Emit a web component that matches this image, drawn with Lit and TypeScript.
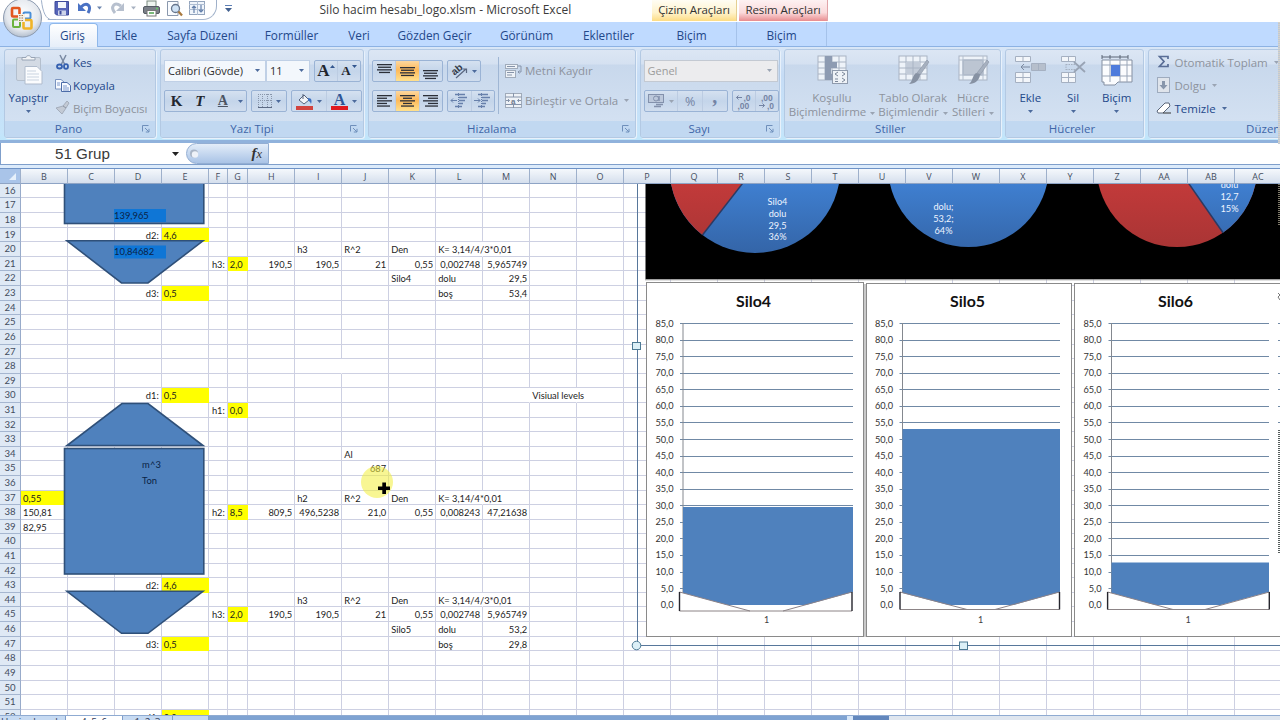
import { LitElement, html, css, svg, nothing } from "lit";
import { customElement } from "lit/decorators.js";
import { classMap } from "lit/directives/class-map.js";

const COLS: [string, number][] = [
  ["B", 47], ["C", 47], ["D", 46.8], ["E", 47.2], ["F", 18.8], ["G", 20.7], ["H", 46.7],
  ["I", 47], ["J", 47], ["K", 47], ["L", 47], ["M", 47], ["N", 47], ["O", 46.8],
  ["P", 47], ["Q", 47], ["R", 47], ["S", 47], ["T", 47], ["U", 47], ["V", 47],
  ["W", 47], ["X", 47], ["Y", 47], ["Z", 47], ["AA", 47], ["AB", 47], ["AC", 47],
];
const ROWS = Array.from({ length: 37 }, (_, i) => i + 16);

/* value, right alignment, yellow fill, text running over the right border */
type Cell = { v: string; r?: boolean; y?: boolean; over?: boolean };
const CELLS: Record<string, Cell> = {
  D19: { v: "d2:", r: true }, E19: { v: "4,6", y: true },
  I20: { v: "h3" }, J20: { v: "R^2" }, K20: { v: "Den" }, L20: { v: "K= 3,14/4/3*0,01", over: true },
  F21: { v: "h3:", r: true }, G21: { v: "2,0", y: true }, H21: { v: "190,5", r: true }, I21: { v: "190,5", r: true },
  J21: { v: "21", r: true }, K21: { v: "0,55", r: true }, L21: { v: "0,002748", r: true }, M21: { v: "5,965749", r: true },
  K22: { v: "Silo4" }, L22: { v: "dolu" }, M22: { v: "29,5", r: true },
  D23: { v: "d3:", r: true }, E23: { v: "0,5", y: true }, L23: { v: "boş" }, M23: { v: "53,4", r: true },
  I28: { v: "", over: true },
  D30: { v: "d1:", r: true }, E30: { v: "0,5", y: true }, N30: { v: "Visiual levels", over: true }, M30: { v: "", over: true },
  F31: { v: "h1:", r: true }, G31: { v: "0,0", y: true },
  J34: { v: "Al" }, J35: { v: "687", r: true },
  B37: { v: "0,55", y: true }, I37: { v: "h2" }, J37: { v: "R^2" }, K37: { v: "Den" }, L37: { v: "K= 3,14/4*0,01", over: true },
  B38: { v: "150,81" }, F38: { v: "h2:", r: true }, G38: { v: "8,5", y: true }, H38: { v: "809,5", r: true },
  I38: { v: "496,5238", r: true }, J38: { v: "21,0", r: true }, K38: { v: "0,55", r: true },
  L38: { v: "0,008243", r: true }, M38: { v: "47,21638", r: true },
  B39: { v: "82,95" },
  D43: { v: "d2:", r: true }, E43: { v: "4,6", y: true },
  I44: { v: "h3" }, J44: { v: "R^2" }, K44: { v: "Den" }, L44: { v: "K= 3,14/4/3*0,01", over: true },
  F45: { v: "h3:", r: true }, G45: { v: "2,0", y: true }, H45: { v: "190,5", r: true }, I45: { v: "190,5", r: true },
  J45: { v: "21", r: true }, K45: { v: "0,55", r: true }, L45: { v: "0,002748", r: true }, M45: { v: "5,965749", r: true },
  K46: { v: "Silo5" }, L46: { v: "dolu" }, M46: { v: "53,2", r: true },
  D47: { v: "d3:", r: true }, E47: { v: "0,5", y: true }, L47: { v: "boş" }, M47: { v: "29,8", r: true },
  D52: { v: "d1:", r: true }, E52: { v: "0,0", y: true },
};

const CHARTS = [
  { name: "Silo4", x: 646.5, w: 217, y: 282.5, title: 753.5, lab: 673.5, ax: 683, end: 853, top: 507, v1: 679.5, v2: 852, b1: 727.5, b2: 806, d1: 750, d2: 783, base: 611, mid: 766.5 },
  { name: "Silo5", x: 866.5, w: 205, y: 283.5, title: 967.5, lab: 893, ax: 902.5, end: 1060, top: 429, v1: 900, v2: 1059.5, b1: 948.5, b2: 1013.5, d1: 967, d2: 995, base: 609.5, mid: 980.5 },
  { name: "Silo6", x: 1074.5, w: 220, y: 283.5, title: 1175.5, lab: 1101.5, ax: 1111.5, end: 1269, top: 562.5, v1: 1107.6, v2: 1269.3, b1: 1155.3, b2: 1220.8, d1: 1173, d2: 1205, base: 609.5, mid: 1188 },
];

const bars = (ws: number[], a: "s" | "m" | "e", y: number) =>
  ws.map((w, i) => {
    const x = a === "s" ? 0 : a === "m" ? (15 - w) / 2 : 15 - w;
    return svg`<rect x=${x} y=${y + i * 2.6} width=${w} height="1.3" fill="#2b2f38"/>`;
  });
const alignIcon = (ws: number[], a: "s" | "m" | "e", y: number) =>
  html`<svg width="15" height="16" viewBox="0 0 15 16">${bars(ws, a, y)}</svg>`;

const drop = (muted = false) =>
  html`<svg class="drop" width="5" height="3" viewBox="0 0 5 3"><path d="M0 0H5L2.500 3Z" fill=${muted ? "#9aa4b3" : "#4c6a9c"}/></svg>`;

const launcher = html`<svg class="launch" width="8" height="8" viewBox="0 0 8 8" fill="none" stroke="#6f8fbb"><path d="M.5 6.500V.5H6.500"/><path d="M3 3L7 7M7 3.800V7H3.800"/></svg>`;

const indent = (flip: boolean) => html`<svg width="17" height="16" viewBox="0 0 17 16" stroke="#6780ab" fill="none">
  <path d="M4 1.500H14M8 4.500H16M8 7.500H14M4 13.500H11" stroke-width="1.500"/><path d="M8 10.500H12" stroke-width="1.500"/>
  <path d=${flip ? "M0 7.500H6M4 5.500L6 7.500L4 9.500" : "M6 7.500H0M2 5.500L0 7.500L2 9.500"}/><path d="M7.500 0V16" stroke-dasharray="1 1"/></svg>`;

const tableIcon = (kind: "cond" | "table" | "style") => html`<svg width="31" height="30" viewBox="0 0 31 30">
  <rect x="1" y="1" width="28" height="24" fill="#eef3f9" stroke="#a9b4c4"/>
  ${kind === "style"
    ? svg`<rect x="5" y="5" width="20" height="15" fill="#bcc5d2" stroke="#9aa6b8"/><path d="M1 5H29M1 20H29M5 1V25M25 1V25" stroke="#b4bfce" fill="none"/>`
    : svg`<path d="M1 7H29M1 13H29M1 19H29M8 1V25M15 1V25M22 1V25" stroke="#a9b4c4" fill="none"/>`}
  ${kind === "cond"
    ? svg`<path d="M8 1h7v6h5v6h-6v6h3v6H8Z" fill="#8d9bb2"/><rect x="15.500" y="15.500" width="15" height="13" fill="#eef2f7" stroke="#8f9bad"/><path d="M21 17L18 19L21 21M25 17L28 19L25 21M18 24H21M18 26.500H21M25 23L28 25L25 27" stroke="#7b8799" fill="none"/>`
    : nothing}
  ${kind === "table" ? svg`<rect x="8" y="7" width="14" height="12" fill="#c3ccd9"/><path d="M8 13H22M15 7V19" stroke="#a9b4c4"/>` : nothing}
  ${kind !== "cond"
    ? svg`<path d="M31 7L22 20L19 18L29 5Z" fill="#a6b0bf" stroke="#8994a5" stroke-width=".6"/><path d="M22 19C22 25 17 29 11 29C15 26 14 21 18 18Z" fill="#8792a3"/>`
    : nothing}
</svg>`;

@customElement("app-root")
export class AppRoot extends LitElement {
  static styles = css`
    :host { display: flex; flex-direction: column; width: 1280px; height: 720px; overflow: hidden; background: #fff; font-family: "Open Sans", "Noto Sans", sans-serif; font-size: 11.5px; color: #23488a; position: relative; }
    * { box-sizing: border-box; }
    svg { display: block; flex: none; overflow: visible; }
    .title { height: 22px; flex: none; display: flex; background: #fff; }
    .quick { width: 217px; height: 20px; padding-left: 53px; display: flex; align-items: center; border-right: 1px solid #9fb0c9; border-bottom: 1px solid #a9b8ce; border-radius: 0 0 14px 0; }
    .more { width: 20px; padding: 5px 0 0 8px; }
    .doc { width: 414px; padding-left: 82.500px; color: #3b3b3b; font-size: 12px; line-height: 19px; white-space: nowrap; letter-spacing: .04px; }
    .ctx { height: 21px; text-align: center; color: #333; font-size: 11.500px; line-height: 20px; white-space: nowrap; letter-spacing: -.08px; }
    .yel { width: 85px; background: linear-gradient(#fffdf4, #fff3cc 60%, #fddc83); border-right: 1px solid #e5cf92; margin-left: 1px; }
    .red { width: 89px; background: linear-gradient(#fdf1f2, #fbdadb 60%, #e88c8f); border-right: 1px solid #e0a4a8; margin-left: 2px; }
    .tabs { height: 25px; flex: none; display: flex; background: #bfdaff; border-bottom: 1px solid #8db2e3; font-size: 11.800px; line-height: 26px; text-align: center; white-space: nowrap; }
    .tab { flex: none; }
    .tab.on { height: 24px; margin-top: 1px; line-height: 23px; background: linear-gradient(#fff, #e6eef9); border: 1px solid #8fb8ea; border-bottom: none; border-radius: 4px 4px 0 0; padding-right: 2px; }
    .tab.sep { border-right: 1px solid #a5c2ea; }
    .ribbon { height: 96px; flex: none; display: flex; gap: 4px; padding: 2px 0 5px 4px; background: linear-gradient(#d8e6f7, #c6dcf5 30%, #c5e4fa 92%, #bfe6fb); border-bottom: 3px solid #90b2dc; overflow: hidden; }
    .group { flex: none; height: 89px; display: flex; flex-direction: column; border: 1px solid #b3c9e3; border-radius: 3px; background: linear-gradient(#dce6f4, #d5e1f1 14px, #c8d8ec 15px, #d6e3f3); box-shadow: 1px 1px 0 #e8f1fb; overflow: hidden; }
    .body { height: 71px; display: flex; flex: none; }
    .foot { height: 16px; background: #c1d8f1; display: flex; align-items: center; color: #3e66a8; font-size: 11.500px; padding: 0 4px 1px 0; }
    .foot span { flex: 1; text-align: center; padding-right: 6px; }
    .foot .none { padding-right: 0; }
    .launch { margin-right: 1px; }
    .rows { display: flex; flex-direction: column; gap: 8px; padding: 10px 3px 0; }
    .row { display: flex; height: 22px; }
    .box { display: flex; border: 1px solid #9ab3d5; border-radius: 2px; background: linear-gradient(#d5e1f0, #c4d5ea 50%, #d0ddee); }
    .box > * { flex: 1; display: flex; align-items: center; justify-content: center; gap: 4px; border-right: 1px solid #bccce2; }
    .box > *:last-child { border-right: none; }
    .box > .lit { background: linear-gradient(#fcd7a0, #fdb95a 45%, #ffe08d); }
    .plain > * { border-right: none; }
    .combo { display: flex; align-items: center; justify-content: space-between; background: #f3f7fc; border: 1px solid #c0d0e6; color: #2d2d2d; padding: 0 5px 1px 3px; white-space: nowrap; font-size: 11px; }
    .combo.off { background: #ececee; color: #9b9b9b; border-color: #c3c9d2; }
    .w101 { width: 102px; } .w43 { width: 44px; } .w46 { width: 47px; } .w82 { width: 83px; } .w35 { width: 36px; }
    .w70 { width: 71px; } .w71 { width: 71px; } .w33 { width: 34px; } .w47 { width: 48px; } .w133 { width: 134px; } .w83 { width: 84px; } .w47b { width: 47px; }
    .g4 { gap: 4px; }
    .ml { margin-left: 4px; }
    .serif { font-family: "Liberation Serif", serif; font-weight: bold; color: #22262e; }
    .f17 { font-size: 17px; } .f14 { font-size: 13px; }
    .bold { font-size: 15px; } .ital { font-size: 15px; font-style: italic; }
    .under { text-decoration: underline; color: #4d5563; font-size: 14px; }
    .vline { width: 1px; height: 57px; margin-top: 7px; background: #9fb6d4; }
    .line { display: flex; align-items: center; gap: 3px; height: 23px; white-space: nowrap; }
    .line .drop { margin-left: 3px; }
    .off { color: #8d939d; }
    .list { display: flex; flex-direction: column; padding-top: .5px; }
    .pano { padding-left: 3px; letter-spacing: -.1px; }
    .pano .line { gap: 2px; }
    .big { display: flex; flex-direction: column; align-items: center; text-align: center; padding-top: 5px; line-height: 14px; white-space: nowrap; }
    .big .pic { height: 30px; margin-bottom: 6px; }
    .big .drop { margin-top: 5px; }
    .inl { display: flex; align-items: center; gap: 4px; }
    .inl .drop { margin-top: 2px; }
    .fx { height: 22px; flex: none; display: flex; background: #fff; border-bottom: 1px solid #7f9fcb; }
    .name { width: 186px; display: flex; align-items: center; justify-content: space-between; padding: 0 7px 0 54px; font: 15.200px "Liberation Sans", sans-serif; color: #3a3a3a; border-left: 1px solid #7f9fcb; }
    .pill { width: 83px; display: flex; justify-content: space-between; align-items: center; padding: 0 6px 0 3px; background: linear-gradient(#e3edf9, #a9c3e6); border: 1px solid #93aed3; border-radius: 11px 0 0 11px; font: italic 15px "Liberation Serif", serif; color: #333; }
    .strip { height: 4px; flex: none; background: #dcebfb; border-bottom: 1px solid #6f93c6; }
    .sheet { height: 546px; flex: none; position: relative; overflow: hidden; font-family: Lato, sans-serif; }
    .grid { display: grid; }
    .h { height: 15px; background: linear-gradient(#f5f8fc, #d5dfed); border-right: 1px solid #9eb0cb; border-bottom: 1px solid #8ea4c5; color: #454e5f; font: 9px/15px "Open Sans", sans-serif; text-align: center; }
    .corner { background: #a9c4e9; display: flex; align-items: flex-end; justify-content: flex-end; padding: 0 4px 3px 0; }
    .n { background: #dfe9f5; border-right: 1px solid #98abca; border-bottom: 1px solid #a5b6d0; font: 9.600px/14px Lato, sans-serif; color: #434d5e; text-align: center; }
    .c { border-right: 1px solid #cdd0e2; border-bottom: 1px solid #cdd0e2; font-size: 9.300px; line-height: 15px; color: #1c1c1c; padding: 0 2px; white-space: nowrap; min-width: 0; }
    .c.r { display: flex; justify-content: flex-end; }
    .c.y { background: #ff0; border-color: #ff0; }
    .c.over { border-right-color: transparent; overflow: visible; }
    .canvas { position: absolute; left: 0; top: 15px; }
    .bottom { height: 5px; flex: none; display: flex; background: #7fa3d2; overflow: hidden; font-size: 10px; line-height: 12px; color: #33415c; border-top: 1px solid #8fabd2; }
    .st { flex: none; text-align: center; background: #c6daf2; border-right: 1px solid #7d9cc8; }
    .st.act { background: #fff; }
    .fill { flex: 1; }
    .split { width: 6px; background: #d6e6f8; } .btn { width: 36px; background: #6287bd; } .bar { width: 391px; background: #dfe6ef; }
    .orb { position: absolute; left: 0; top: -6px; }
    .edge { position: absolute; left: 1278px; top: 22px; width: 2px; height: 122px; background: repeating-linear-gradient(#d5d2ca 0 1px, #bfc8d4 1px 2px); }
  `;

  private quick() {
    return html`<div class="quick"><svg width="163" height="20" viewBox="53 0 163 20" fill="none">
      <path d="M55 1.500H68.500V15H56.500L55 13.500Z" fill="#5664b8" stroke="#3d4a9b"/><rect x="58" y="2" width="8" height="6" fill="#f2f5fb"/><rect x="58" y="10.500" width="8" height="4.500" fill="#cdd4ea"/><rect x="59.500" y="11" width="2" height="3.500" fill="#3d4a9b"/>
      <path d="M81 7C87 1 92 6 88 13" stroke="#4a72c4" stroke-width="3"/><path d="M78 3V11H86Z" fill="#4a72c4"/>
      <path d="M97 6.500H102L99.500 9.500Z" fill="#6c85ad"/>
      <path d="M121 6C114 1 110 7 115 13" stroke="#b7c0ce" stroke-width="3"/><path d="M124 3V11H116Z" fill="#b7c0ce"/>
      <path d="M131 6.500H136L133.500 9.500Z" fill="#a8b2c1"/>
      <rect x="147" y="1" width="9" height="6" fill="#eef4ef" stroke="#7b8a80"/><rect x="143.500" y="6.500" width="16" height="7" rx="1.500" fill="#7b8088" stroke="#555b63"/><rect x="147" y="10.500" width="9" height="5.500" fill="#fff" stroke="#777"/><path d="M149 13H154" stroke="#4da34d" stroke-width="1.500"/><circle cx="157" cy="8.500" r="1" fill="#61d061"/>
      <path d="M167.500 1.500H178V15.500H167.500Z" fill="#fafcff" stroke="#8a98ad"/><circle cx="175.500" cy="8.500" r="4" fill="#cfe2f5" stroke="#66758c" stroke-width="1.300"/><path d="M178.500 11.500L182 15.500" stroke="#a9793d" stroke-width="2.300"/>
      <rect x="189.500" y="1.500" width="15" height="13" fill="#f0f5fb" stroke="#94a5bd"/><path d="M189 4.500H205M197.500 1V15M189 9.500H205" stroke="#aebdd2"/><path d="M194 13V6M192 8L194 6L196 8M201 5V12M199 10L201 12L203 10" stroke="#6480ab" stroke-width="1.200"/>
    </svg></div>
    <div class="more"><svg width="7" height="9" viewBox="0 0 7 9"><path d="M0 .5H7" stroke="#5d7fb5"/><path d="M0 3H7L3.500 7Z" fill="#42608f"/></svg></div>`;
  }

  private orb() {
    return html`<svg class="orb" width="48" height="46" viewBox="0 -6 48 46" fill="none">
      <defs><radialGradient id="og" cx=".5" cy=".4" r=".6"><stop offset="0" stop-color="#fff"/><stop offset=".7" stop-color="#e4e8ee"/><stop offset="1" stop-color="#b4bfce"/></radialGradient></defs>
      <path d="M0 22V-6H40C42 4 45 18 50 22Z" fill="#fff"/><path d="M41 -4C42 8 44 17 50 19.500H56" stroke="#9fb0c9"/>
      <circle cx="22.500" cy="18" r="19" fill="url(#og)" stroke="#8c9aaf"/>
      <rect x="12" y="8" width="7.500" height="8.500" stroke="#e2571f" stroke-width="2.600" rx="1"/>
      <rect x="23.500" y="12.500" width="7" height="6" stroke="#4a8fd8" stroke-width="2" rx="1"/>
      <rect x="13" y="19.500" width="7" height="7.500" stroke="#6cb33f" stroke-width="2" rx="1"/>
      <rect x="23.500" y="20" width="8" height="8.500" stroke="#f0b428" stroke-width="2.600" rx="1"/>
      <rect x="18" y="14" width="7" height="8" fill="#f6efe4"/><path d="M19 15.500H24M19 18H24M19 20.500H24" stroke="#9b7d60" stroke-dasharray="1.500 1"/>
    </svg>`;
  }

  private ribbon() {
    return html`<div class="ribbon">
      <div class="group" style="width:152px"><div class="body">
        <div class="big" style="width:47px"><svg class="pic" width="30" height="30" viewBox="0 0 30 30">
            <rect x="2.500" y="2.500" width="24" height="23" rx="1.500" fill="#d3dae4" stroke="#b4bfcd"/><path d="M8 5V2.500H12C12 0 17 0 17 2.500H21V5Z" fill="#f3f5f8" stroke="#98a4b5"/>
            <path d="M11 11.500H23L28 16.500V29H11Z" fill="#fbfcfe" stroke="#b0bccd"/><path d="M13 16H22M13 19H25M13 22H25M13 25H25" stroke="#c9d3e0"/></svg>
          <span>Yapıştır</span>${drop()}</div>
        <div class="list pano">
          <div class="line"><svg width="16" height="16" viewBox="0 0 16 16" fill="none"><path d="M5 1L10 11M11 1L6 11" stroke="#7a8aa3" stroke-width="1.500"/><ellipse cx="4.500" cy="12.500" rx="2.500" ry="2" stroke="#3560b0" stroke-width="1.800"/><ellipse cx="11" cy="12.500" rx="2" ry="2.300" stroke="#3560b0" stroke-width="1.800"/></svg><span>Kes</span></div>
          <div class="line"><svg width="16" height="16" viewBox="0 0 16 16"><path d="M.5 2.500H6L9 5V12H.5Z" fill="#f7faff" stroke="#7a93bf"/><path d="M6.500 5.500H12L15.500 8.500V14.500H6.500Z" fill="#f7faff" stroke="#4c6ca8"/><path d="M2 6H5M2 8H5M8 9H12M8 11H14M8 13H14" stroke="#7c98cc"/></svg><span>Kopyala</span></div>
          <div class="line off"><svg width="16" height="16" viewBox="0 0 16 16"><path d="M1 8L8 6L12 1L14 3L11 8L7 14Z" fill="#c3cad5" stroke="#a4adbb"/><path d="M8 6L11 8" stroke="#8b95a5"/></svg><span>Biçim Boyacısı</span></div>
        </div></div>
        <div class="foot"><span style="padding-right:10px">Pano</span>${launcher}</div></div>

      <div class="group" style="width:204px"><div class="body"><div class="rows">
        <div class="row"><div class="combo w101"><span>Calibri (Gövde)</span>${drop()}</div><div class="combo w43"><span>11</span>${drop()}</div>
          <div class="box w46 ml"><span class="serif f17">A<svg width="5" height="3" viewBox="0 0 5 3" style="margin:-9px 0 0 -4px"><path d="M0 3H5L2.500 0Z" fill="#33568f"/></svg></span><span class="serif f14">A<svg width="5" height="3" viewBox="0 0 5 3" style="margin:-9px 0 0 -3px"><path d="M0 0H5L2.500 3Z" fill="#33568f"/></svg></span></div></div>
        <div class="row g4"><div class="box plain w82"><span class="serif bold">K</span><span class="serif ital">T</span><span class="serif under">A</span><span style="flex:.5">${drop()}</span></div>
          <div class="box w35"><span><svg width="14" height="14" viewBox="0 0 14 14" fill="none" stroke="#8996ab"><path d="M.5 0V13M4.500 0V13M9.500 0V13M13.500 0V13M0 .5H14M0 6.500H14" stroke-dasharray="1 1"/><path d="M0 13.500H14" stroke="#5b6a85"/></svg>${drop()}</span></div>
          <div class="box w70"><span><svg width="17" height="17" viewBox="0 0 17 17"><path d="M3 7L8 2L13 7L8 11Z" fill="#f2f4f8" stroke="#56647d"/><path d="M7 1V6" stroke="#56647d"/><path d="M12 5C16 5 16 8 15 11C14 8 13 8 12 8Z" fill="#3c6fc0"/><rect y="13" width="17" height="4" fill="#d2433f"/></svg>${drop()}</span>
          <span><svg width="17" height="17" viewBox="0 0 17 17"><text x="8.500" y="12" text-anchor="middle" font-family="Liberation Serif" font-weight="bold" font-size="16" fill="#2e5597">A</text><rect y="13" width="17" height="4" fill="#e0191f"/></svg>${drop()}</span></div></div>
      </div></div><div class="foot"><span style="padding-right:7px">Yazı Tipi</span>${launcher}</div></div>

      <div class="group" style="width:267.5px"><div class="body"><div class="rows">
        <div class="row g4"><div class="box w71"><span>${alignIcon([15, 13, 15, 11], "m", 1)}</span><span class="lit">${alignIcon([15, 13, 15, 13], "m", 4)}</span><span>${alignIcon([15, 13, 15, 11], "m", 7)}</span></div>
          <div class="box w33"><span><svg width="17" height="16" viewBox="0 0 17 16"><text x="1" y="10" font-family="Liberation Sans" font-weight="bold" font-size="10" fill="#333a48" transform="rotate(-40 6 8)">ab</text><path d="M5 15L15 6M11.500 6H15.500V10" stroke="#5a6780" fill="none" stroke-width="1.200"/></svg>${drop()}</span></div></div>
        <div class="row g4"><div class="box w71"><span>${alignIcon([15, 10, 15, 10, 13], "s", 2)}</span><span class="lit">${alignIcon([15, 9, 15, 9, 13], "m", 2)}</span><span>${alignIcon([15, 10, 15, 10, 13], "e", 2)}</span></div>
          <div class="box w47"><span>${indent(false)}</span><span>${indent(true)}</span></div></div>
        </div><div class="vline"></div>
        <div class="list off" style="padding:9px 0 0 6px;gap:7px">
          <div class="line"><svg width="17" height="16" viewBox="0 0 17 16" fill="none"><rect x=".5" y="1.500" width="12" height="4" fill="#eef2f7" stroke="#a0abba"/><rect x=".5" y="7.500" width="10" height="7" fill="#eef2f7" stroke="#a0abba"/><path d="M2 3.500H10M2 9.500H9M2 12H7M13 3H16V9H13M14.500 7.500L13 9L14.500 10.500" stroke="#8694aa"/></svg><span>Metni Kaydır</span></div>
          <div class="line"><svg width="17" height="16" viewBox="0 0 17 16" fill="none"><rect x=".5" y=".5" width="16" height="14" fill="#eef2f7" stroke="#a0abba"/><path d="M.5 4H16.500M.5 11.500H16.500M8.500 0V4M8.500 11.500V15M1 7.500H4.500M3 6L4.500 7.500L3 9M16 7.500H12.500M14 6L12.500 7.500L14 9" stroke="#8694aa"/><text x="6" y="10.500" font-size="8" font-weight="bold" fill="#707c90" font-family="Liberation Sans">a</text></svg><span>Birleştir ve Ortala</span>${drop(true)}</div>
        </div></div><div class="foot"><span style="padding-right:7px">Hizalama</span>${launcher}</div></div>

      <div class="group" style="width:140.5px"><div class="body"><div class="rows">
        <div class="row"><div class="combo off w133"><span>Genel</span>${drop(true)}</div></div>
        <div class="row g4"><div class="box w83 off"><span style="flex:1.4"><svg width="17" height="16" viewBox="0 0 17 16" fill="none" stroke="#8391ac"><rect x=".5" y="1.500" width="15" height="8" fill="#bcc8db"/><circle cx="8" cy="5.500" r="2.500"/><path d="M8 11.500H15M6 13.500H13M11 3V8" stroke-width="1.500"/></svg>${drop(true)}</span><span style="font-size:12.5px;color:#7484a4">%</span><span class="serif" style="color:#7484a4;font-size:20px;line-height:8px;padding-bottom:10px">,</span></div>
          <div class="box w47b"><span><svg width="18" height="17" viewBox="0 0 18 17" font-family="Liberation Sans" font-weight="bold" font-size="8.500" fill="#7484a4"><text x="8.500" y="7.500">,0</text><text x="2.500" y="16">,00</text><path d="M7 4.500H1.500M3.500 2.500L1.500 4.500L3.500 6.500" stroke="#7484a4" fill="none"/></svg></span>
          <span><svg width="18" height="17" viewBox="0 0 18 17" font-family="Liberation Sans" font-weight="bold" font-size="8.500" fill="#7484a4"><text x="3" y="7.500">,00</text><text x="9" y="16">,0</text><path d="M1 12.500H6.500M4.500 10.500L6.500 12.500L4.500 14.500" stroke="#7484a4" fill="none"/></svg></span></div></div>
      </div></div><div class="foot"><span style="padding-right:8px">Sayı</span>${launcher}</div></div>

      <div class="group" style="width:216.5px"><div class="body off">
        <div class="big" style="width:94px"><div class="pic">${tableIcon("cond")}</div><span>Koşullu</span><span class="inl">Biçimlendirme ${drop(true)}</span></div>
        <div class="big" style="width:68px"><div class="pic">${tableIcon("table")}</div><span>Tablo Olarak</span><span class="inl">Biçimlendir ${drop(true)}</span></div>
        <div class="big" style="width:52px"><div class="pic">${tableIcon("style")}</div><span>Hücre</span><span class="inl">Stilleri ${drop(true)}</span></div>
      </div><div class="foot"><span class="none">Stiller</span></div></div>

      <div class="group" style="width:139px"><div class="body">
        <div class="big" style="width:50px"><svg class="pic" width="31" height="30" viewBox="0 0 31 30" fill="#f3f6fa" stroke="#a5b0c1"><path d="M.5 1.500H15.500V6.500H.5ZM8 1.500V6.500M.5 17.500H15.500V27.500H.5ZM8 17.500V27.500M.5 22.500H15.500"/><path d="M16.500 8.500H30.500V15.500H16.500ZM23.500 8.500V15.500" fill="#b6bfcc"/><path d="M15 12H6M9 9L6 12L9 15" fill="none" stroke="#7c8aa1"/></svg><span>Ekle</span>${drop()}</div>
        <div class="big" style="width:36px"><svg class="pic" width="25" height="30" viewBox="0 0 25 30" fill="#f3f6fa" stroke="#a5b0c1"><path d="M.5 1.500H14.500V6.500H.5ZM7.500 1.500V6.500M.5 17.500H14.500V27.500H.5ZM7.500 17.500V27.500M.5 22.500H14.500"/><path d="M5 9.500H14M5 14.500H14M5 9V15" stroke-dasharray="1.500 1"/><path d="M13 7L24 17M24 7L13 17" stroke="#98a3b4" stroke-width="1.800"/></svg><span>Sil</span>${drop()}</div>
        <div class="big" style="width:52px"><svg class="pic" width="32" height="30" viewBox="0 0 32 30" fill="none"><path d="M1 2H27M1 0V4M9 0V4M19 0V4M27 0V4" stroke="#5b6474"/><path d="M1 5H31V27H17L14 30H3V27H1Z" fill="#fbfcfe" stroke="#848fa1"/><path d="M1 10H31M1 21H31M9 5V27M19 5V27M26 5V27" stroke="#9aa6b8"/><rect x="10" y="10" width="9" height="11" fill="#4d7bdc"/></svg><span>Biçim</span>${drop()}</div>
      </div><div class="foot"><span class="none">Hücreler</span></div></div>

      <div class="group" style="width:262px"><div class="body"><div class="list" style="padding-left:7px">
          <div class="line off"><svg width="16" height="16" viewBox="0 0 16 16"><path d="M12 5V2.500H3.500L8 7.500L3.500 12.500H12V10" stroke="#5a6e96" stroke-width="1.700" fill="none"/></svg><span>Otomatik Toplam</span>${drop(true)}</div>
          <div class="line off"><svg width="16" height="16" viewBox="0 0 16 16"><rect x="1.500" y=".5" width="12" height="15" fill="#dfe4eb" stroke="#9eabbe"/><path d="M6 4H9V8H11.500L7.500 12.500L3.500 8H6Z" fill="#8896ab"/></svg><span>Dolgu</span>${drop(true)}</div>
          <div class="line"><svg width="16" height="16" viewBox="0 0 16 16"><path d="M1 11L9 3H13L14 6L7 13H2Z" fill="#fff" stroke="#596579"/><path d="M7 13H15" stroke="#333"/></svg><span>Temizle</span>${drop()}</div>
        </div></div><div class="foot"><span class="none">Düzenleme</span></div></div>
    </div>`;
  }

  private chart(c: (typeof CHARTS)[number]) {
    const y = (v: number) => 604.700 - v * 3.314;
    const ticks = Array.from({ length: 18 }, (_, i) => i * 5);
    return svg`<g>
      <rect x=${c.x} y=${c.y} width=${c.w} height=${636.5 - c.y} fill="#fff" stroke="#8a8a8a"/>
      <text x=${c.title} y="307" text-anchor="middle" font-size="16" font-weight="bold" fill="#111" textLength="35" lengthAdjust="spacingAndGlyphs">${c.name}</text>
      ${ticks.map((t) => svg`<text x=${c.lab} y=${y(t) + 3.5} text-anchor="end" font-size="9.200" fill="#333">${t},0</text>
        ${t > 0 ? svg`<path d=${`M${c.ax - 3} ${Math.round(y(t)) + 0.5}H${c.end}`} stroke="#7089a5"/>` : nothing}`)}
      <path d=${`M${c.ax} 323V593`} stroke="#84888f"/>
      <path d=${`M${c.ax} ${c.top}H${c.end}V592L${c.b2} 605H${c.b1}L${c.ax} 593Z`} fill="#4f81bd"/>
      <path d=${`M${c.v1} 592L${c.d1} ${c.base}M${c.d2} ${c.base}L${c.v2} 592`} stroke="#8b8288" fill="none"/>
      <path d=${`M${c.v1} ${c.base}H${c.v2}`} stroke="#8c8486"/>
      <path d=${`M${c.v1} 592V${c.base}M${c.v2} 592V${c.base}`} stroke="#26262e" stroke-width="1.400"/>
      <text x=${c.mid} y="623" text-anchor="middle" font-size="9" fill="#404040">1</text>
    </g>`;
  }

  private canvas() {
    const lines = (x: number, y0: number, step: number, t: string[]) =>
      t.map((s, i) => svg`<text x=${x} y=${y0 + i * step} text-anchor="middle" font-size="9.200" fill="#eef4ff">${s}</text>`);
    return html`<svg class="canvas" width="1280" height="531" viewBox="0 184 1280 531" font-family="Lato, sans-serif">
      <defs>
        <clipPath id="v"><rect x="0" y="184" width="1280" height="531"/></clipPath>
        <linearGradient id="bl" gradientUnits="userSpaceOnUse" x1="0" x2="0" y1="184" y2="252"><stop offset="0" stop-color="#3f7fd0"/><stop offset="1" stop-color="#3465a8"/></linearGradient>
        <linearGradient id="rd" gradientUnits="userSpaceOnUse" x1="0" x2="0" y1="184" y2="252"><stop offset="0" stop-color="#c23a3a"/><stop offset="1" stop-color="#a73434"/></linearGradient>
      </defs>
      <g clip-path="url(#v)">
      <g fill="#4f81bd" stroke="#2f5079" stroke-width="1.600">
        <rect x="64.500" y="170" width="139.300" height="53.500"/>
        <path d="M67 240.800H203L148 283H121.500Z"/>
        <path d="M122 403.500H148L203 445.500H67Z"/>
        <rect x="64.500" y="448.500" width="139.300" height="125.500"/>
        <path d="M67 591.300H203L148 633.300H121.500Z"/>
      </g>
      <rect x="114" y="209" width="52" height="13" fill="#0f76d6"/><rect x="114" y="245.500" width="52" height="13" fill="#0f76d6"/>
      <g font-size="9.400" fill="#0a2346"><text x="114" y="218.500">139,965</text><text x="114" y="255">10,84682</text>
        <text x="142" y="467.500" textLength="19">m^3</text><text x="142" y="484.300">Ton</text></g>

      <path d="M637.500 184V645.500H1280" fill="none" stroke="#57779b"/>
      <rect x="645.500" y="184" width="640" height="95.300" fill="#000"/><path d="M645 279.800H1280" stroke="#999"/>
      <circle cx="755" cy="167.400" r="85.600" fill="url(#bl)"/>
      <path d="M755 167.400L702.500 235A85.600 85.600 0 0 1 669.400 167.400Z" fill="url(#rd)"/><path d="M755 167.400L702.500 235" stroke="#2c3a63" stroke-width="1.500"/>
      <circle cx="968.500" cy="166.600" r="80.400" fill="url(#bl)"/>
      <circle cx="1177" cy="166.600" r="80.400" fill="url(#rd)"/>
      <path d="M1177 166.600L1223 232.700A80.400 80.400 0 0 0 1257.400 166.600Z" fill="url(#bl)"/><path d="M1177 166.600L1223 232.700" stroke="#2c3a63" stroke-width="1.500"/>
      ${lines(777.5, 205, 11.8, ["Silo4", "dolu", "29,5", "36%"])}
      ${lines(943.5, 210, 11.8, ["dolu;", "53,2;", "64%"])}
      ${lines(1229.5, 188, 11.8, ["dolu", "12,7", "15%"])}
      <path d="M1279 184V225" stroke="#7f7a6a" stroke-dasharray="1 1" stroke-width="2"/>

      <rect x="864" y="284" width="3" height="353" fill="#c9c9c9"/>
      ${CHARTS.map((c) => this.chart(c))}
      <g stroke="#7089a5">${[55, 60, 65, 70, 75, 80, 85].map((t) => svg`<path d=${`M1278 ${Math.round(604.7 - t * 3.314) + 0.5}H1280`}/>`)}</g>
      <path d="M1279 430V553" stroke="#565d5c" stroke-width="2" stroke-dasharray="1 1"/>
      <path d="M1278 293L1280 295L1278 297L1280 300" fill="none" stroke="#777"/>
      <g fill="#dcf0f7" stroke="#4d7a94"><circle cx="636.500" cy="645.500" r="4.300"/><rect x="632.500" y="342.500" width="8" height="7"/><rect x="959.500" y="642" width="8" height="7.500"/></g>

      <circle cx="377" cy="482" r="16" fill="#f3ee3a" opacity=".55"/>
      <path d="M382.300 482.500H386V486.500H390V490H386V494H382.300V490H378V486.500H382.300Z" fill="#000"/>
      </g>
    </svg>`;
  }

  render() {
    const tabs: [string, number][] = [["Ekle", 56], ["Sayfa Düzeni", 97], ["Formüller", 81], ["Veri", 54], ["Gözden Geçir", 97], ["Görünüm", 87], ["Eklentiler", 77], ["Biçim", 90], ["Biçim", 90]];
    const columns = `21px ${COLS.map((c) => c[1] + "px").join(" ")}`;
    return html`
      <div class="title">${this.quick()}<div class="doc">Silo hacim hesabı_logo.xlsm - Microsoft Excel</div><div class="ctx yel">Çizim Araçları</div><div class="ctx red">Resim Araçları</div></div>
      <div class="tabs"><div class="tab" style="width:49px"></div><div class="tab on" style="width:49px">Giriş</div>
        ${tabs.map(([t, w], i) => html`<div class=${classMap({ tab: true, sep: i === 7 || i === 8 })} style="width:${w}px">${t}</div>`)}</div>
      ${this.ribbon()}
      <div class="fx"><div class="name"><span>51 Grup</span><svg width="7" height="4" viewBox="0 0 7 4"><path d="M0 0H7L3.500 4Z" fill="#222"/></svg></div>
        <div class="pill"><svg width="9" height="10" viewBox="0 0 9 10"><circle cx="4" cy="4.500" r="4" fill="#a9b5c6"/><circle cx="5" cy="5.500" r="3.200" fill="#eef2f8"/></svg><span><b>f</b><small>x</small></span></div></div>
      <div class="strip"></div>
      <div class="sheet">
        <div class="grid" style="grid-template-columns:${columns};grid-template-rows:14.800px repeat(37,14.613px)">
          <div class="h corner"><svg width="7" height="7" viewBox="0 0 7 7"><path d="M7 0V7H0Z" fill="#e6f0fb"/></svg></div>
          ${COLS.map(([n]) => html`<div class="h">${n}</div>`)}
          ${ROWS.map((r) => html`<div class="n">${r}</div>${COLS.map(([n]) => {
            const c = CELLS[n + r];
            return html`<div class=${classMap({ c: true, r: !!c?.r, y: !!c?.y, over: !!c?.over })}>${c?.v ?? nothing}</div>`;
          })}`)}
        </div>
        ${this.canvas()}
      </div>
      <div class="bottom"><div class="st" style="width:66px">Hacim hesabı</div><div class="st act" style="width:57px">4_5_6</div><div class="st" style="width:50px">1_2_3</div><div class="st" style="width:36px"></div><div class="fill"></div><div class="split"></div><div class="btn"></div><div class="bar"></div></div>
      ${this.orb()}<div class="edge"></div>`;
  }
}
